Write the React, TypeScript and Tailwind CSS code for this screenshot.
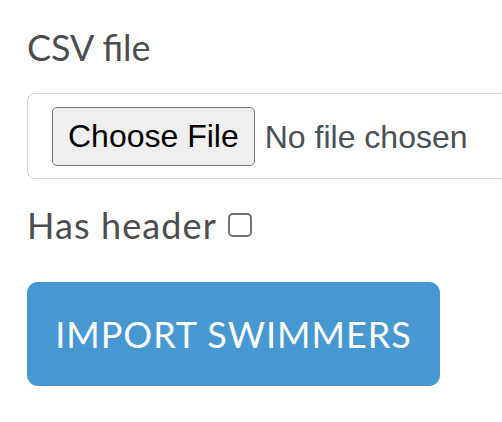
export default function App() {
  return (
    <div className="min-h-[422px] overflow-hidden bg-white pl-[27px] pt-[22px] font-['Lato',sans-serif] text-[#4d4d4d]">
      <form className="flex flex-col">
        <label htmlFor="csv" className="text-[36px] leading-[50px]">
          CSV file
        </label>
        <div className="mt-[21px] flex h-[86px] w-[520px] items-center rounded-[8px] border border-[#ced4da] pl-[24px]">
          <input
            id="csv"
            type="file"
            className="font-['Liberation_Sans',sans-serif] text-[32px] text-[#495057] file:mr-[10px] file:h-[59px] file:rounded-[5px] file:border file:border-solid file:border-[#767676] file:bg-[#efefef] file:px-[15px] file:font-['Liberation_Sans',sans-serif] file:text-[32px] file:text-black"
          />
        </div>
        <label className="mt-[24px] flex items-center gap-[11px] text-[36px] leading-[44px] tracking-[1.1px]">
          Has header
          <input type="checkbox" className="h-[24px] w-[24px] appearance-none rounded-[5px] border-2 border-[#707070] bg-white" />
        </label>
        <div className="mt-[35px]">
          <button
            type="button"
            className="h-[104px] w-[413px] rounded-[11px] bg-[#4798d0] text-[36px] tracking-[1px] text-white"
          >
            IMPORT SWIMMERS
          </button>
        </div>
      </form>
    </div>
  );
}
